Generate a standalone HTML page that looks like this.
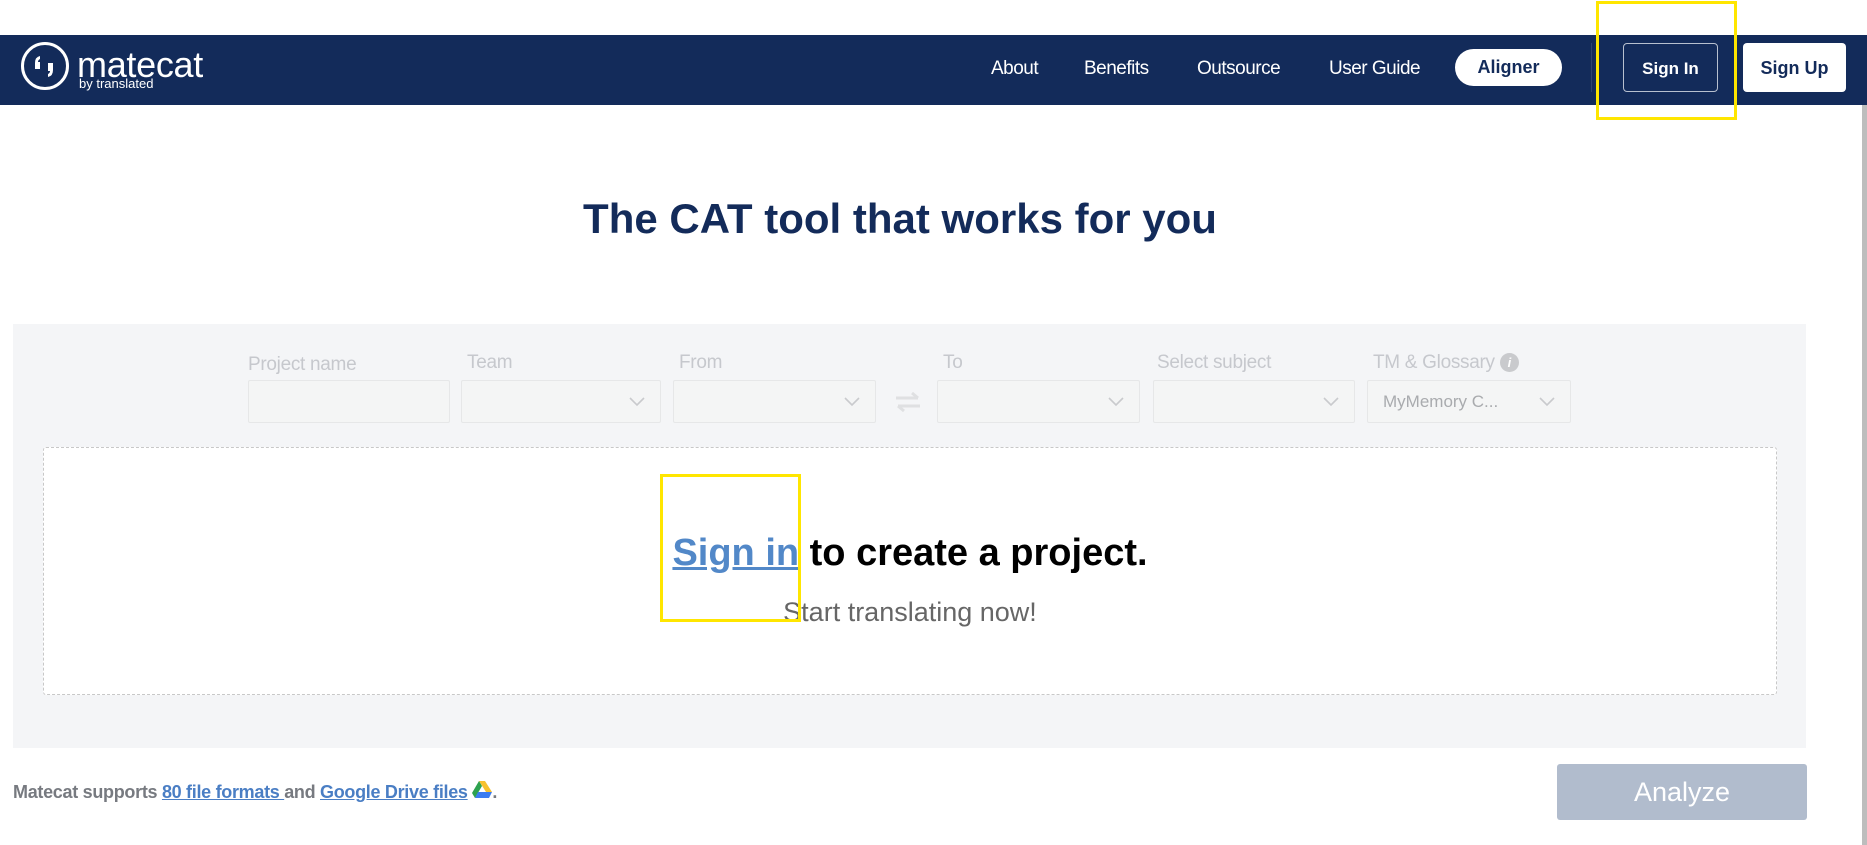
<!DOCTYPE html>
<html><head><meta charset="utf-8"><style>
*{margin:0;padding:0;box-sizing:border-box}
body{width:1867px;height:845px;background:#fff;position:relative;overflow:hidden;font-family:"Liberation Sans",sans-serif}
.nav{position:absolute;left:0;top:35px;width:1867px;height:70px;background:#132b5a}
.a{position:absolute}
.ni{position:absolute;top:58px;color:#fff;font-size:19px;letter-spacing:-0.5px}
.lbl{position:absolute;top:352px;color:#c6c8cd;font-size:19px;letter-spacing:-0.3px}
.inp{position:absolute;top:380px;height:43px;background:#f4f5f5;border:1px solid #e6e7e8;border-radius:2px}
.chev{position:absolute;right:14px;top:11px}
</style></head><body>
<div class="nav"></div>
<svg class="a" style="left:19px;top:40px" width="52" height="52" viewBox="0 0 52 52"><circle cx="26" cy="26" r="22.5" fill="none" stroke="#fff" stroke-width="3"/><path d="M16 23 q0-6 5-7 v3 q-2 1-2 3 h2 v7 h-5 z" fill="#fff"/><path d="M29 23 h5 v7 q0 6-5 7 v-3 q2-1 2-3 h-2 z" fill="#fff"/></svg>
<div class="a" style="left:77px;top:44px;color:#fff;font-size:36px;letter-spacing:-0.3px">matecat</div>
<div class="a" style="left:79px;top:76px;color:#fff;font-size:13px">by translated</div>
<div class="ni" style="left:991px">About</div>
<div class="ni" style="left:1084px">Benefits</div>
<div class="ni" style="left:1197px">Outsource</div>
<div class="ni" style="left:1329px">User Guide</div>
<div class="a" style="left:1455px;top:49px;width:107px;height:37px;background:#fff;border-radius:19px;color:#132b5a;font-size:18px;font-weight:bold;text-align:center;line-height:37px">Aligner</div>
<div class="a" style="left:1591px;top:43px;width:1px;height:49px;background:#2d4470"></div>
<div class="a" style="left:1623px;top:43px;width:95px;height:49px;border:1px solid #b8c0cf;border-radius:4px;color:#fff;font-size:17px;font-weight:bold;text-align:center;line-height:49px">Sign In</div>
<div class="a" style="left:1596px;top:1px;width:141px;height:119px;border:3px solid #ffe600"></div>
<div class="a" style="left:1743px;top:43px;width:103px;height:49px;background:#fff;border-radius:4px;color:#132b5a;font-size:18px;font-weight:bold;text-align:center;line-height:51px">Sign Up</div>
<div class="a" style="left:1862px;top:105px;width:5px;height:740px;background:#bdbdbd"></div>
<div class="a" style="left:0;top:195px;width:1800px;text-align:center;color:#132b5a;font-size:42px;font-weight:bold">The CAT tool that works for you</div>
<div class="a" style="left:13px;top:324px;width:1793px;height:424px;background:#f4f5f7"></div>
<div class="lbl" style="left:248px;top:354px">Project name</div>
<div class="lbl" style="left:467px">Team</div>
<div class="lbl" style="left:679px">From</div>
<div class="lbl" style="left:943px">To</div>
<div class="lbl" style="left:1157px">Select subject</div>
<div class="lbl" style="left:1373px">TM &amp; Glossary <span style="display:inline-block;width:19px;height:19px;border-radius:50%;background:#c9cacd;color:#fff;font-size:13px;font-style:italic;font-weight:bold;text-align:center;line-height:19px;vertical-align:1px">i</span></div>
<div class="inp" style="left:248px;width:202px"></div>
<div class="inp" style="left:461px;width:200px"><svg class="chev" width="18" height="18"><path d="M2 6l7 7 7-7" fill="none" stroke="#c9cacd" stroke-width="1.6"/></svg></div>
<div class="inp" style="left:673px;width:203px"><svg class="chev" width="18" height="18"><path d="M2 6l7 7 7-7" fill="none" stroke="#c9cacd" stroke-width="1.6"/></svg></div>
<svg class="a" style="left:895px;top:391px" width="26" height="22"><path d="M1 7h22M17 2l6 5M25 15H3M9 20l-6-5" fill="none" stroke="#dfe0e2" stroke-width="3"/></svg>
<div class="inp" style="left:937px;width:203px"><svg class="chev" width="18" height="18"><path d="M2 6l7 7 7-7" fill="none" stroke="#c9cacd" stroke-width="1.6"/></svg></div>
<div class="inp" style="left:1153px;width:202px"><svg class="chev" width="18" height="18"><path d="M2 6l7 7 7-7" fill="none" stroke="#c9cacd" stroke-width="1.6"/></svg></div>
<div class="inp" style="left:1367px;width:204px;color:#a9abae;font-size:17px;line-height:41px;padding-left:15px">MyMemory C...<svg class="chev" width="18" height="18"><path d="M2 6l7 7 7-7" fill="none" stroke="#c9cacd" stroke-width="1.6"/></svg></div>
<div class="a" style="left:43px;top:447px;width:1734px;height:248px;background:#fff;border:1px dashed #c8c8c8;border-radius:3px"></div>
<div class="a" style="left:0;top:532px;width:1820px;text-align:center;font-size:38px;font-weight:bold;color:#000"><span style="color:#5288c8;text-decoration:underline">Sign in</span> to create a project.</div>
<div class="a" style="left:0;top:597px;width:1820px;text-align:center;font-size:27px;color:#666">Start translating now!</div>
<div class="a" style="left:660px;top:474px;width:141px;height:148px;border:3px solid #ffe600"></div>
<div class="a" style="left:13px;top:781px;font-size:18px;font-weight:bold;color:#777a80;letter-spacing:-0.3px">Matecat supports <span style="color:#4a7ec4;text-decoration:underline">80 file formats </span>and <span style="color:#4a7ec4;text-decoration:underline">Google Drive files</span> <svg width="20" height="17" viewBox="0 0 20 17" style="vertical-align:0px"><path d="M7 0h6l7 11h-6z" fill="#f7c12f"/><path d="M7 0l3 5-7 12-3-5z" fill="#2ea24f"/><path d="M3 17l3-6h14l-3 6z" fill="#3b7cf0"/></svg>.</div>
<div class="a" style="left:1557px;top:764px;width:250px;height:56px;background:#b1bccd;border-radius:3px;color:#fff;font-size:27px;text-align:center;line-height:56px">Analyze</div>
</body></html>
